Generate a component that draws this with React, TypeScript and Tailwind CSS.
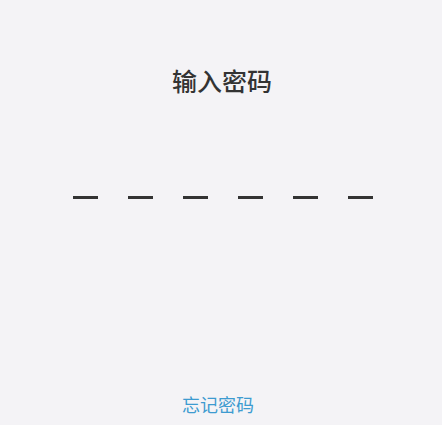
export default function App() {
  return (
    <div
      className="w-[442px] h-[425px] bg-[#f4f3f6] flex flex-col items-center overflow-hidden"
      style={{ fontFamily: '"Noto Sans CJK SC", "Noto Sans", sans-serif' }}
    >
      <div className="mt-[64px] text-[25px] leading-[32px] font-medium text-[#333333] pl-[2px]">输入密码</div>
      <div className="mt-[100px] flex gap-[30px] pl-[4px]">
        {[0, 1, 2, 3, 4, 5].map((i) => (
          <div key={i} className="w-[25px] h-[3px] bg-[#333333]" />
        ))}
      </div>
      <div className="mt-auto mb-[9px] text-[18px] leading-[24px] text-[#3d9bd0] pr-[6px]">忘记密码</div>
    </div>
  );
}
